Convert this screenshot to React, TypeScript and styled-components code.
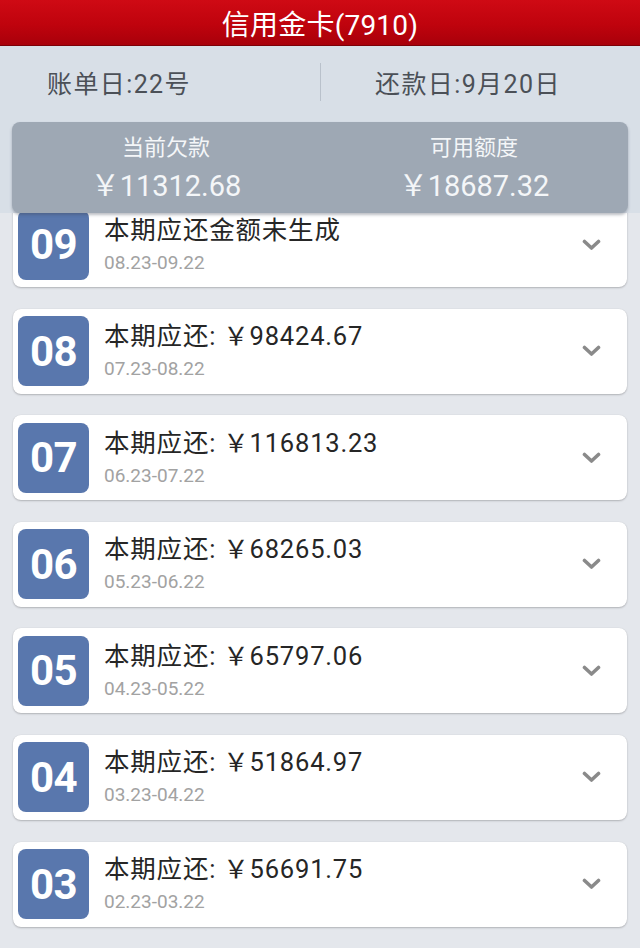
import React from "react";
import styled, { createGlobalStyle } from "styled-components";

const Global = createGlobalStyle`
  html, body { margin: 0; padding: 0; }
  body {
    background: #e4e7ec;
    font-family: Roboto, "Noto Sans CJK SC", "Noto Sans", sans-serif;
    width: 640px;
    height: 948px;
    overflow: hidden;
  }
`;

const Page = styled.div`
  width: 640px;
  min-height: 948px;
  display: flex;
  flex-direction: column;
  background: #e4e7ec;
`;

const TitleBar = styled.header`
  height: 45px;
  border-bottom: 1px solid #7c0007;
  background: linear-gradient(180deg, #cf0a14 0%, #bf030d 55%, #a8000a 100%);
  display: flex;
  align-items: center;
  justify-content: center;
  color: #fff;
  font-size: 28px;
  letter-spacing: 0.2px;
`;

const TopPanel = styled.section`
  position: relative;
  z-index: 2;
  background: #d8dfe7;
`;

const InfoRow = styled.div`
  height: 72px;
  padding-bottom: 4px;
  display: grid;
  grid-template-columns: 1fr 1fr;
  align-items: center;
`;

const InfoCell = styled.div<{ $pad: number; $divider?: boolean }>`
  height: 38px;
  display: flex;
  align-items: center;
  padding-left: ${(p) => p.$pad}px;
  border-left: ${(p) => (p.$divider ? "1px solid #b9c1cb" : "none")};
  font-size: 25px;
  letter-spacing: 1.4px;
  color: #4b5057;
`;

const Summary = styled.div`
  margin: 0 12px;
  height: 91px;
  border-radius: 8px;
  background: #9ea8b4;
  box-shadow: 0 2px 3px rgba(60, 70, 85, 0.35);
  display: grid;
  grid-template-columns: 1fr 1fr;
`;

const SummaryCol = styled.div`
  display: flex;
  flex-direction: column;
  align-items: center;
  padding-top: 12px;
  color: #f4f6f8;
`;

const SummaryLabel = styled.div`
  font-size: 22px;
  line-height: 28px;
`;

const SummaryValue = styled.div`
  font-size: 29px;
  line-height: 36px;
  margin-top: 6px;
`;

const List = styled.div`
  margin-top: -11px;
  padding: 0 13px;
  display: flex;
  flex-direction: column;
  gap: 21.6px;
  position: relative;
  z-index: 1;
`;

const Card = styled.div`
  height: 85px;
  background: #ffffff;
  border-radius: 8px;
  box-shadow: 0 1px 2px rgba(0, 0, 0, 0.22), 0 0 1px rgba(0, 0, 0, 0.12);
  display: flex;
  align-items: center;
  padding: 0 26px 0 5px;
`;

const Badge = styled.div`
  width: 71px;
  height: 70px;
  border-radius: 8px;
  background: #5977ad;
  color: #fff;
  font-weight: 700;
  font-size: 42px;
  letter-spacing: -0.5px;
  display: flex;
  align-items: center;
  justify-content: center;
  flex-shrink: 0;
`;

const TextBlock = styled.div`
  flex: 1;
  margin-left: 15px;
  display: flex;
  flex-direction: column;
`;

const CardTitle = styled.div`
  font-size: 25.5px;
  line-height: 30px;
  letter-spacing: 0.8px;
  color: #262626;
`;

const CardDate = styled.div`
  margin-top: 6px;
  font-size: 19px;
  line-height: 24px;
  color: #a2a2a2;
`;

const Chevron = () => (
  <svg width="19" height="12" viewBox="0 0 19 12">
    <polyline
      points="2.5,2.5 9.5,9 16.5,2.5"
      fill="none"
      stroke="#8a8a8a"
      strokeWidth="3.6"
      strokeLinecap="round"
      strokeLinejoin="round"
    />
  </svg>
);

const bills = [
  { n: "09", title: "本期应还金额未生成", date: "08.23-09.22" },
  { n: "08", title: "本期应还: ￥98424.67", date: "07.23-08.22" },
  { n: "07", title: "本期应还: ￥116813.23", date: "06.23-07.22" },
  { n: "06", title: "本期应还: ￥68265.03", date: "05.23-06.22" },
  { n: "05", title: "本期应还: ￥65797.06", date: "04.23-05.22" },
  { n: "04", title: "本期应还: ￥51864.97", date: "03.23-04.22" },
  { n: "03", title: "本期应还: ￥56691.75", date: "02.23-03.22" },
];

export default function App() {
  return (
    <Page>
      <Global />
      <TitleBar>信用金卡(7910)</TitleBar>
      <TopPanel>
        <InfoRow>
          <InfoCell $pad={47}>账单日:22号</InfoCell>
          <InfoCell $pad={54} $divider>
            还款日:9月20日
          </InfoCell>
        </InfoRow>
        <Summary>
          <SummaryCol>
            <SummaryLabel>当前欠款</SummaryLabel>
            <SummaryValue>￥11312.68</SummaryValue>
          </SummaryCol>
          <SummaryCol>
            <SummaryLabel>可用额度</SummaryLabel>
            <SummaryValue>￥18687.32</SummaryValue>
          </SummaryCol>
        </Summary>
      </TopPanel>
      <List>
        {bills.map((b) => (
          <Card key={b.n}>
            <Badge>{b.n}</Badge>
            <TextBlock>
              <CardTitle>{b.title}</CardTitle>
              <CardDate>{b.date}</CardDate>
            </TextBlock>
            <Chevron />
          </Card>
        ))}
      </List>
    </Page>
  );
}
